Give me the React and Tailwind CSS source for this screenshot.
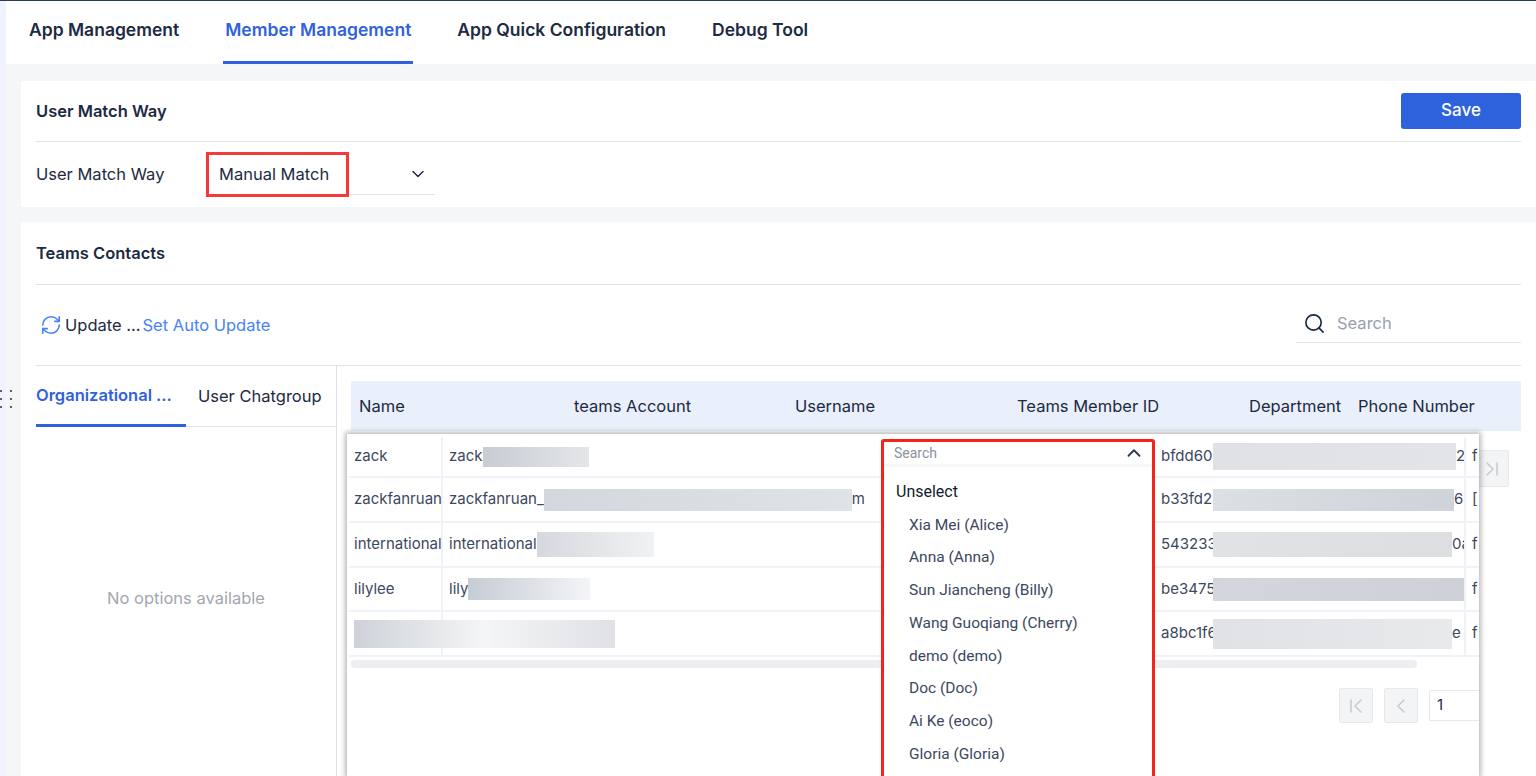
import React from 'react';
import { ChevronDown, ChevronUp, ChevronLeft, ChevronFirst, ChevronLast, RefreshCw, Search } from 'lucide-react';

const tabs = ['App Management', 'Member Management', 'App Quick Configuration', 'Debug Tool'];
const columns = [
    ['Name', 'w-[215px]'],
    ['teams Account', 'w-[221px]'],
    ['Username', 'w-[222px]'],
    ['Teams Member ID', 'w-[232px]'],
    ['Department', 'w-[109px]'],
    ['Phone Number', 'w-[150px]'],
];
const rows = [
    { name: 'zack', account: 'zack', accountBlur: 'w-[106px] h-[20px] from-[#c8ccd3] to-[#e4e6e9]', id: 'bfdd60', idBlur: 'w-[243px] h-[27px] from-[#dfe1e5] to-[#e2e4e7]', idEnd: '29', last: 'f', h: 'h-[41px]' },
    { name: 'zackfanruan', account: 'zackfanruan_', accountBlur: 'w-[308px] h-[22px] from-[#d4d7dd] to-[#dfe2e6]', accountEnd: 'm', id: 'b33fd2', idBlur: 'w-[241px] h-[22px] from-[#dcdfe3] to-[#cfd3da]', idEnd: '6', last: '[', h: 'h-[45px]' },
    { name: 'international', account: 'international', accountBlur: 'w-[117px] h-[25px] from-[#d5d8dd] to-[#f1f2f4]', id: '543233', idBlur: 'w-[239px] h-[25px] from-[#e0e2e5] to-[#dcdee2]', idEnd: '0a', last: 'f', h: 'h-[45px]' },
    { name: 'lilylee', account: 'lily', accountBlur: 'w-[122px] h-[22px] from-[#c6ccd5] to-[#f3f5f7]', id: 'be3475', idBlur: 'w-[251px] h-[23px] from-[#d3d7dd] to-[#ced2d8]', idEnd: ')', last: 'f', h: 'h-[44px]' },
    { name: '', account: '', id: 'a8bc1f6', idBlur: 'w-[239px] h-[30px] from-[#e0e2e6] to-[#e8e9eb]', idEnd: 'e', last: 'f', h: 'h-[45px]' },
];
const people = [
    'Xia Mei (Alice)',
    'Anna (Anna)',
    'Sun Jiancheng (Billy)',
    'Wang Guoqiang (Cherry)',
    'demo (demo)',
    'Doc (Doc)',
    'Ai Ke (eoco)',
    'Gloria (Gloria)',
];

const Blur = ({ className }) => (
    <div className={`shrink-0 bg-gradient-to-r ${className}`}></div>
);

const PagerButton = ({ children, className }) => (
    <div className={`flex items-center justify-center w-[34px] h-[35px] bg-[#f3f4f6] border border-[#e6e8ec] rounded-[2px] text-[#c5cad3] ${className}`}>
        {children}
    </div>
);

const TableRow = ({ row }) => (
    <div className={`flex ${row.h} border-b-2 border-[#f0f2f7] text-[15px] text-[#3c4860]`}>
        <div className="w-[94px] shrink-0 flex items-center pl-[5px] border-r-2 border-[#f0f2f7] whitespace-nowrap overflow-visible">
            {row.name ? row.name : <Blur className="w-[261px] h-[28px] from-[#ced2d8] via-[#f4f5f6] to-[#dfe1e5]" />}
        </div>
        <div className="w-[711px] shrink-0 flex items-center pl-[6px] whitespace-nowrap overflow-hidden">
            {row.account}
            {row.accountBlur && <Blur className={row.accountBlur} />}
            {row.accountEnd}
        </div>
        <div className="w-[312px] shrink-0 flex items-center pl-[7px] border-r-2 border-[#f0f2f7] whitespace-nowrap overflow-hidden">
            <span className="w-[52px] shrink-0 overflow-hidden">{row.id}</span>
            <Blur className={row.idBlur} />
            <span>{row.idEnd}</span>
        </div>
        <div className="flex-1 flex items-center pl-[6px]">{row.last}</div>
    </div>
);

const MemberPopup = () => (
    <div className="absolute left-[347px] top-[434px] w-[1132px] h-[342px] bg-white shadow-[0_0_5px_2px_rgba(0,0,0,0.28)] pt-[3px] pl-[2px]">
        {rows.map((row, i) => (
            <TableRow key={i} row={row} />
        ))}
        <div className="mt-[3px] ml-[2px] w-[1066px] h-[8px] rounded-full bg-[#eceef1]"></div>
        <div className="flex justify-end items-center gap-[11px] mt-[20px]">
            <PagerButton><ChevronFirst size={24} strokeWidth={1.5} /></PagerButton>
            <PagerButton><ChevronLeft size={24} strokeWidth={1.5} /></PagerButton>
            <div className="w-[50px] h-[31px] border border-[#e6e8ec] border-r-0 rounded-l-[2px] pl-[7px] flex items-center text-[15px] text-[#1c2a42]">1</div>
        </div>
        <div className="absolute left-[534px] top-[5px] w-[274px] h-[340px] bg-white border-[3px] border-[#f5241a] rounded-t-[3px] font-['Roboto',sans-serif]">
            <div className="flex items-center justify-between h-[25px] pl-[10px] pr-[7px] border-b-[3px] border-[#f6f7f9] text-[14px] text-[#8b929c]">
                <span>Search</span>
                <ChevronUp size={22} strokeWidth={2} className="text-[#2c3a50]" />
            </div>
            <div className="pl-[12px] pt-[9px] text-[16px] text-[#111a2b] leading-[32.7px]">Unselect</div>
            {people.map((person) => (
                <div key={person} className="pl-[25px] text-[15.5px] text-[#3c4860] leading-[32.7px] whitespace-nowrap">{person}</div>
            ))}
        </div>
    </div>
);

export default function App() {
    return (
        <div className="relative h-[776px] overflow-hidden flex flex-col bg-[#f5f6f8] font-['Inter',sans-serif] text-[#1c2a42]">
            <div className="h-px shrink-0 bg-[#2b3a55]"></div>
            <div className="flex flex-1 min-h-0">
                <div className="w-[6px] shrink-0 bg-[#f0f3fd]"></div>
                <div className="flex-1 min-w-0 flex flex-col">
                    <div className="h-[63px] shrink-0 bg-white flex gap-[42px] pl-[21px]">
                        {tabs.map((tab, i) => (
                            <div
                                key={tab}
                                className={`flex items-center h-full px-[2px] pb-[2px] text-[17.5px] font-semibold whitespace-nowrap ${i === 1 ? 'text-[#2f62dc] border-b-[3px] border-[#2f62dc]' : 'border-b-[3px] border-transparent'}`}
                            >
                                {tab}
                            </div>
                        ))}
                    </div>

                    <div className="mt-[17px] ml-[15px] h-[126px] shrink-0 bg-white px-[15px]">
                        <div className="flex items-center justify-between h-[61px] border-b border-[#dfe1e6] mr-0">
                            <div className="text-[16.5px] font-semibold">User Match Way</div>
                            <button className="w-[120px] h-[36px] -mt-[1px] bg-[#2e62dc] rounded-[3px] text-white text-[17px] font-medium">Save</button>
                        </div>
                        <div className="flex items-center h-[64px] text-[16.5px]">
                            <div className="w-[171px] shrink-0">User Match Way</div>
                            <div className="relative flex items-center justify-between w-[228px] h-[40px] mt-[1px] border-b border-[#dfe1e6] pl-[12px] pr-[7px]">
                                <span>Manual Match</span>
                                <ChevronDown size={20} strokeWidth={1.75} />
                                <div className="absolute -left-px -top-[3px] w-[143px] h-[45px] border-[3px] border-[#f53838]"></div>
                            </div>
                        </div>
                    </div>

                    <div className="mt-[15px] ml-[15px] flex-1 min-h-0 bg-white px-[15px]">
                        <div className="flex items-center h-[63px] border-b border-[#dfe1e6] text-[16.5px] font-semibold">Teams Contacts</div>
                        <div className="flex items-center justify-between h-[81px] border-b border-[#dfe1e6]">
                            <div className="flex items-center pl-[4px] text-[16.5px]">
                                <RefreshCw size={22} strokeWidth={1.75} className="text-[#4a82f5] mr-[3px]" />
                                <span>Update …</span>
                                <span className="text-[#4a82f5] ml-[2px]">Set Auto Update</span>
                            </div>
                            <div className="flex items-center w-[225px] h-[38px] -mt-[3px] border-b border-[#dfe1e6] pl-[7px] text-[16.5px] text-[#98a0ae]">
                                <Search size={23} strokeWidth={1.75} className="text-[#1c2a42] mr-[11px]" />
                                Search
                            </div>
                        </div>
                        <div className="flex">
                            <div className="w-[301px] shrink-0 h-[410px] border-r border-[#dfe1e6] flex flex-col">
                                <div className="flex items-center h-[61px] border-b border-[#dfe1e6] text-[16.5px]">
                                    <div className="flex items-center w-[150px] h-full border-b-[3px] border-[#2f62dc] -mb-px text-[#2f62dc] font-semibold whitespace-nowrap">Organizational …</div>
                                    <div className="ml-[12px] whitespace-nowrap">User Chatgroup</div>
                                </div>
                                <div className="flex-1 flex items-center justify-center pb-[7px] text-[16.5px] text-[#a3a7ae]">No options available</div>
                            </div>
                            <div className="flex-1 min-w-0 pl-[14px] pt-[15px]">
                                <div className="flex items-center h-[50px] pl-[8px] bg-[#e9f0fb] text-[16.5px] whitespace-nowrap overflow-hidden">
                                    {columns.map(([label, width]) => (
                                        <div key={label} className={`${width} shrink-0`}>{label}</div>
                                    ))}
                                </div>
                                <div className="flex justify-end mt-[19px] mr-[12px]">
                                    <PagerButton className="h-[37px] w-[31px]"><ChevronLast size={24} strokeWidth={1.5} /></PagerButton>
                                </div>
                            </div>
                        </div>
                    </div>
                </div>
            </div>

            <div className="absolute left-0 top-[390px] grid grid-cols-2 gap-x-[8px] gap-y-[6px]">
                {[0, 1, 2, 3, 4, 5].map((dot) => (
                    <div key={dot} className="w-[2px] h-[2px] bg-[#56606f]"></div>
                ))}
            </div>

            <MemberPopup />
        </div>
    );
}
